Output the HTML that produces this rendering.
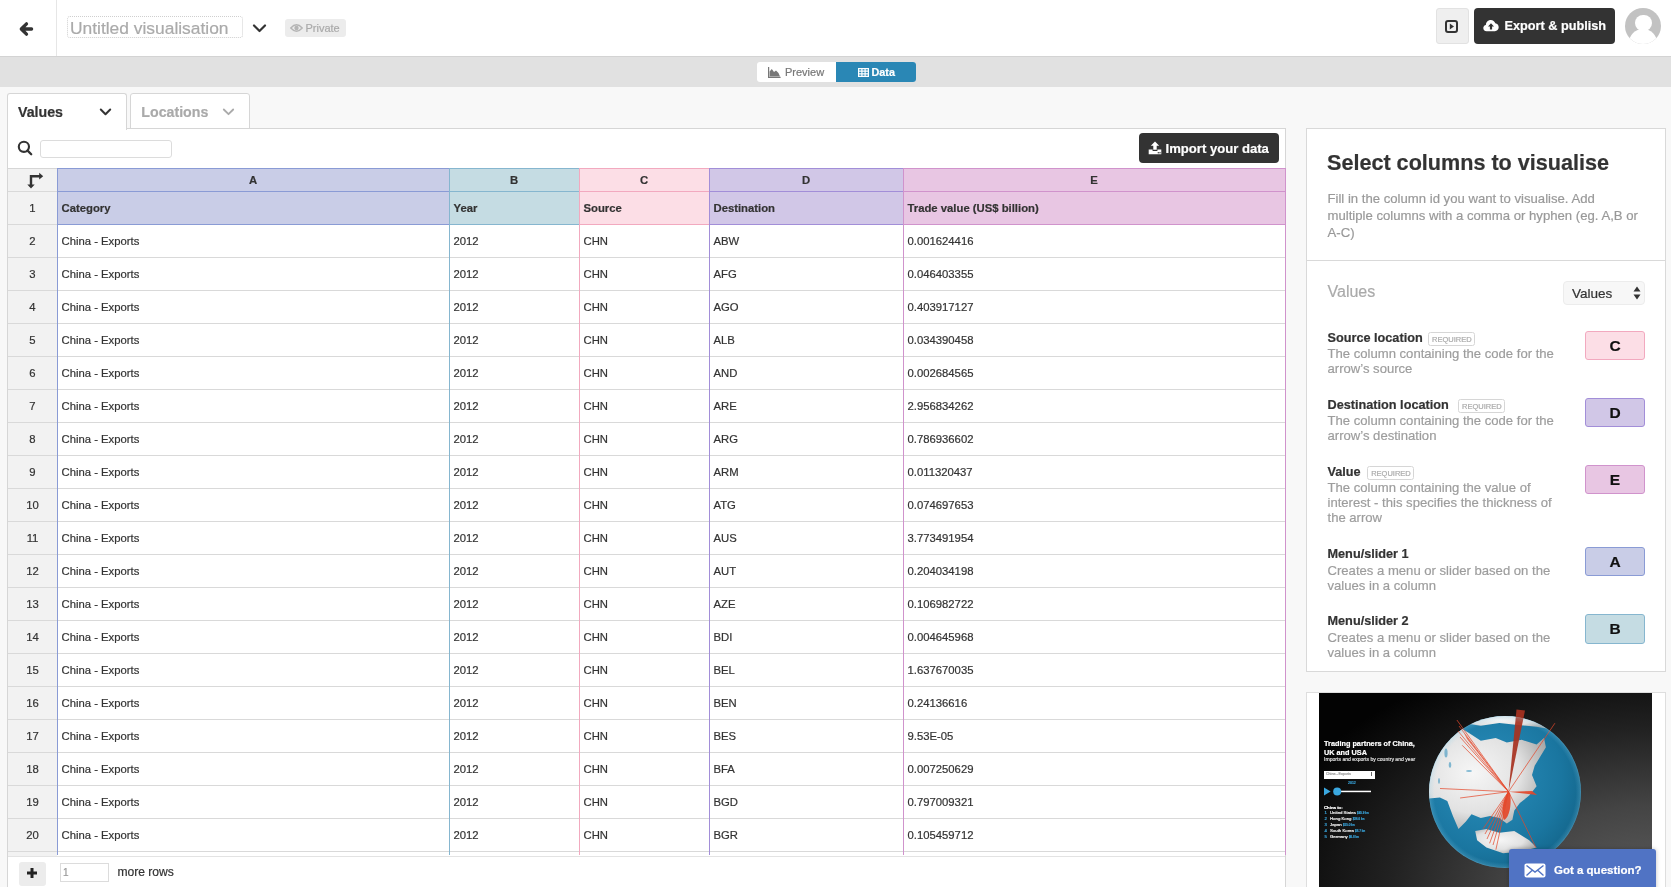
<!DOCTYPE html>
<html><head><meta charset="utf-8"><title>Flourish</title>
<style>
*{box-sizing:border-box;margin:0;padding:0}
html,body{width:1671px;height:887px;overflow:hidden;background:#f8f8f8;font-family:"Liberation Sans",sans-serif;color:#333}
.a{position:absolute;white-space:nowrap;line-height:1}
.b{font-weight:bold}
.a{-webkit-text-stroke:0.2px currentColor}
</style></head><body><div style="position:absolute;left:0;top:0;width:1671px;height:887px;overflow:hidden;will-change:transform">

<div class="a" style="left:0;top:0;width:1671px;height:57px;background:#fff;border-bottom:1px solid #d3d3d3"></div>
<div class="a" style="left:56px;top:0;width:1px;height:56px;background:#e6e6e6"></div>
<svg class="a" style="left:18px;top:20px" width="18" height="18" viewBox="0 0 18 18"><path d="M8.5 3.8 L3.3 9 L8.5 14.2 M3.8 9 H13.6" fill="none" stroke="#333" stroke-width="3.3" stroke-linecap="round" stroke-linejoin="round"/></svg>
<div class="a" style="left:67px;top:16px;width:176px;height:22px;border:1px dotted #cfcfcf;border-radius:3px"></div>
<div class="a" style="left:70px;top:19.6px;font-size:17.4px;color:#aaa">Untitled visualisation</div>
<svg class="a" style="left:252px;top:23px" width="15" height="11" viewBox="0 0 15 11"><path d="M2 2.5 L7.5 8 L13 2.5" fill="none" stroke="#333" stroke-width="2.2" stroke-linecap="round" stroke-linejoin="round"/></svg>
<div class="a" style="left:285px;top:19px;width:61px;height:18px;background:#ececec;border-radius:3px"></div>
<svg class="a" style="left:290px;top:23px" width="13" height="10" viewBox="0 0 13 10"><path d="M0.8 5 Q6.5 -1.5 12.2 5 Q6.5 11.5 0.8 5Z" fill="none" stroke="#b5b5b5" stroke-width="1.4"/><circle cx="6.5" cy="5" r="2.2" fill="#b5b5b5"/></svg>
<div class="a" style="left:305.5px;top:22.6px;font-size:11px;color:#aaa">Private</div>
<div class="a" style="left:1436px;top:8px;width:33px;height:36px;background:#efefef;border:1px solid #e2e2e2;border-radius:3px"></div>
<svg class="a" style="left:1445px;top:20px" width="13" height="13" viewBox="0 0 13 13"><rect x="1" y="1" width="11" height="11" rx="2" fill="none" stroke="#333" stroke-width="2"/><path d="M4.8 3.6 L9 6.5 L4.8 9.4Z" fill="#333"/></svg>
<div class="a" style="left:1474px;top:8px;width:141px;height:36px;background:#333;border-radius:4px"></div>
<svg class="a" style="left:1483px;top:19px" width="16" height="13" viewBox="0 0 16 13"><path d="M3.6 12.2 C1.4 12.2 0.3 10.6 0.3 9 C0.3 7.4 1.4 6.2 2.9 6 C2.9 3.2 5 1 7.8 1 C10 1 11.6 2.3 12.3 4.3 C14.3 4.5 15.7 6.2 15.7 8.3 C15.7 10.5 14 12.2 11.9 12.2 Z" fill="#fff"/><path d="M8 4.2 L11 7.4 L9.1 7.4 L9.1 10.4 L6.9 10.4 L6.9 7.4 L5 7.4Z" fill="#333"/></svg>
<div class="a b" style="left:1504.5px;top:20.3px;font-size:12.7px;color:#fff">Export &amp; publish</div>
<div class="a" style="left:1625px;top:8px;width:36px;height:36px;border-radius:50%;background:#c2c2c2;overflow:hidden"><div style="position:absolute;left:10px;top:6.5px;width:16.5px;height:16.5px;border-radius:50%;background:#fff"></div><div style="position:absolute;left:4px;top:21px;width:28px;height:28px;border-radius:50%;background:#fff"></div></div>
<div class="a" style="left:0;top:57px;width:1671px;height:30px;background:#e1e1e1"></div>
<div class="a" style="left:757px;top:62px;width:159px;height:20px;background:#fff;border-radius:3px"></div>
<div class="a" style="left:836px;top:62px;width:80px;height:20px;background:#2a87b5;border-radius:0 3px 3px 0"></div>
<svg class="a" style="left:768px;top:67px" width="13" height="11" viewBox="0 0 13 11"><path d="M0.6 0 V10.4 H12.6" fill="none" stroke="#777" stroke-width="1.2"/><path d="M1.6 9.5 V4.5 L3.8 2 L6 5 L8 3.5 L10.5 6 L12 9.5Z" fill="#777"/></svg>
<div class="a" style="left:785px;top:66.7px;font-size:11px;color:#777">Preview</div>
<svg class="a" style="left:857.5px;top:67.5px" width="11" height="9" viewBox="0 0 11 9"><path d="M0.6 0.6 H10.4 V8.4 H0.6Z M0.6 3.2 H10.4 M0.6 5.8 H10.4 M3.9 0.6 V8.4 M7.1 0.6 V8.4" fill="none" stroke="#fff" stroke-width="1.2"/></svg>
<div class="a b" style="left:871.5px;top:66.9px;font-size:10.8px;color:#fff">Data</div>
<div class="a" style="left:7px;top:93px;width:120px;height:37px;background:#fff;border:1px solid #d6d6d6;border-bottom:none;border-radius:3px 3px 0 0;z-index:2"></div>
<div class="a b" style="left:18px;top:105.1px;font-size:14.2px;color:#333;z-index:3">Values</div>
<svg class="a" style="left:99px;top:107px;z-index:3" width="13" height="10" viewBox="0 0 13 10"><path d="M1.8 2.5 L6.5 7.2 L11.2 2.5" fill="none" stroke="#333" stroke-width="2" stroke-linecap="round" stroke-linejoin="round"/></svg>
<div class="a" style="left:130px;top:93px;width:120px;height:36px;background:#fff;border:1px solid #d6d6d6;border-radius:3px 3px 0 0"></div>
<div class="a b" style="left:141.3px;top:105.1px;font-size:14.2px;color:#aaa">Locations</div>
<svg class="a" style="left:222px;top:107px" width="13" height="10" viewBox="0 0 13 10"><path d="M1.8 2.5 L6.5 7.2 L11.2 2.5" fill="none" stroke="#aaa" stroke-width="1.8" stroke-linecap="round" stroke-linejoin="round"/></svg>
<div class="a" style="left:7px;top:128px;width:1279px;height:770px;background:#fff;border:1px solid #d6d6d6"></div>
<svg class="a" style="left:16px;top:139px" width="18" height="18" viewBox="0 0 18 18"><circle cx="7.9" cy="7.8" r="5.1" fill="none" stroke="#333" stroke-width="2.1"/><path d="M11.6 11.6 L15.2 15.2" stroke="#333" stroke-width="2.3" stroke-linecap="round"/></svg>
<div class="a" style="left:40px;top:139.5px;width:132px;height:18px;border:1px solid #dcdcdc;border-radius:3px;background:#fff"></div>
<div class="a" style="left:1139px;top:133px;width:140px;height:30px;background:#333;border-radius:4px"></div>
<svg class="a" style="left:1148px;top:141px" width="15" height="14" viewBox="0 0 15 14"><path d="M7 0.5 L11.2 4.8 L8.7 4.8 L8.7 8.8 L5.3 8.8 L5.3 4.8 L2.8 4.8Z" fill="#fff"/><path d="M0.7 8.6 H4.6 V10 H9.4 V8.6 H13.3 V13.3 H0.7Z" fill="#fff"/><circle cx="10.3" cy="11.7" r="0.7" fill="#333"/><circle cx="12" cy="11.7" r="0.7" fill="#333"/></svg>
<div class="a b" style="left:1165.6px;top:141.9px;font-size:13.1px;color:#fff">Import your data</div>
<div class="a" style="left:8px;top:168px;width:49px;height:719px;background:#f2f2f2"></div>
<div class="a" style="left:8px;top:168px;width:49px;height:1px;background:#d6d6d6"></div>
<svg class="a" style="left:26px;top:172px" width="19" height="18" viewBox="0 0 19 18"><path d="M5 15 V4.2 H14" fill="none" stroke="#333" stroke-width="2.4"/><path d="M1.3 12.6 H8.7 L5 16.6Z" fill="#333"/><path d="M13.2 0.8 L17.2 4.2 L13.2 7.6Z" fill="#333"/></svg>
<div class="a" style="left:57px;top:168px;width:392px;height:57px;background:#c9cde7"></div>
<div class="a" style="left:449px;top:168px;width:130px;height:57px;background:#c5dce3"></div>
<div class="a" style="left:579px;top:168px;width:130px;height:57px;background:#fcdee6"></div>
<div class="a" style="left:709px;top:168px;width:194px;height:57px;background:#d1c7e7"></div>
<div class="a" style="left:903px;top:168px;width:382px;height:57px;background:#e8c6e3"></div>
<div class="a" style="left:8px;top:224px;width:1278px;height:1px;background:#d9d9d9"></div>
<div class="a" style="left:8px;top:257px;width:1278px;height:1px;background:#d9d9d9"></div>
<div class="a" style="left:8px;top:290px;width:1278px;height:1px;background:#d9d9d9"></div>
<div class="a" style="left:8px;top:323px;width:1278px;height:1px;background:#d9d9d9"></div>
<div class="a" style="left:8px;top:356px;width:1278px;height:1px;background:#d9d9d9"></div>
<div class="a" style="left:8px;top:389px;width:1278px;height:1px;background:#d9d9d9"></div>
<div class="a" style="left:8px;top:422px;width:1278px;height:1px;background:#d9d9d9"></div>
<div class="a" style="left:8px;top:455px;width:1278px;height:1px;background:#d9d9d9"></div>
<div class="a" style="left:8px;top:488px;width:1278px;height:1px;background:#d9d9d9"></div>
<div class="a" style="left:8px;top:521px;width:1278px;height:1px;background:#d9d9d9"></div>
<div class="a" style="left:8px;top:554px;width:1278px;height:1px;background:#d9d9d9"></div>
<div class="a" style="left:8px;top:587px;width:1278px;height:1px;background:#d9d9d9"></div>
<div class="a" style="left:8px;top:620px;width:1278px;height:1px;background:#d9d9d9"></div>
<div class="a" style="left:8px;top:653px;width:1278px;height:1px;background:#d9d9d9"></div>
<div class="a" style="left:8px;top:686px;width:1278px;height:1px;background:#d9d9d9"></div>
<div class="a" style="left:8px;top:719px;width:1278px;height:1px;background:#d9d9d9"></div>
<div class="a" style="left:8px;top:752px;width:1278px;height:1px;background:#d9d9d9"></div>
<div class="a" style="left:8px;top:785px;width:1278px;height:1px;background:#d9d9d9"></div>
<div class="a" style="left:8px;top:818px;width:1278px;height:1px;background:#d9d9d9"></div>
<div class="a" style="left:8px;top:851px;width:1278px;height:1px;background:#d9d9d9"></div>
<div class="a" style="left:57px;top:168px;width:393px;height:1px;background:#8a9bd5"></div>
<div class="a" style="left:57px;top:191px;width:393px;height:1px;background:#8a9bd5"></div>
<div class="a" style="left:57px;top:224px;width:393px;height:1px;background:#8a9bd5"></div>
<div class="a" style="left:449px;top:168px;width:131px;height:1px;background:#86b6cf"></div>
<div class="a" style="left:449px;top:191px;width:131px;height:1px;background:#86b6cf"></div>
<div class="a" style="left:449px;top:224px;width:131px;height:1px;background:#86b6cf"></div>
<div class="a" style="left:579px;top:168px;width:131px;height:1px;background:#f2a9bf"></div>
<div class="a" style="left:579px;top:191px;width:131px;height:1px;background:#f2a9bf"></div>
<div class="a" style="left:579px;top:224px;width:131px;height:1px;background:#f2a9bf"></div>
<div class="a" style="left:709px;top:168px;width:195px;height:1px;background:#a28ed8"></div>
<div class="a" style="left:709px;top:191px;width:195px;height:1px;background:#a28ed8"></div>
<div class="a" style="left:709px;top:224px;width:195px;height:1px;background:#a28ed8"></div>
<div class="a" style="left:903px;top:168px;width:383px;height:1px;background:#d093cc"></div>
<div class="a" style="left:903px;top:191px;width:383px;height:1px;background:#d093cc"></div>
<div class="a" style="left:903px;top:224px;width:383px;height:1px;background:#d093cc"></div>
<div class="a" style="left:8px;top:191px;width:49px;height:1px;background:#d9d9d9"></div>
<div class="a" style="left:57px;top:168px;width:1px;height:687px;background:#8a9bd5"></div>
<div class="a" style="left:449px;top:168px;width:1px;height:687px;background:#86b6cf"></div>
<div class="a" style="left:579px;top:168px;width:1px;height:687px;background:#f2a9bf"></div>
<div class="a" style="left:709px;top:168px;width:1px;height:687px;background:#a28ed8"></div>
<div class="a" style="left:903px;top:168px;width:1px;height:687px;background:#d093cc"></div>
<div class="a" style="left:1285px;top:168px;width:1px;height:687px;background:#d093cc"></div>
<div class="a b" style="left:57px;width:392px;text-align:center;top:174.6px;font-size:11.3px;color:#333">A</div>
<div class="a b" style="left:61.5px;top:203.3px;font-size:11.3px;color:#333">Category</div>
<div class="a b" style="left:449px;width:130px;text-align:center;top:174.6px;font-size:11.3px;color:#333">B</div>
<div class="a b" style="left:453.5px;top:203.3px;font-size:11.3px;color:#333">Year</div>
<div class="a b" style="left:579px;width:130px;text-align:center;top:174.6px;font-size:11.3px;color:#333">C</div>
<div class="a b" style="left:583.5px;top:203.3px;font-size:11.3px;color:#333">Source</div>
<div class="a b" style="left:709px;width:194px;text-align:center;top:174.6px;font-size:11.3px;color:#333">D</div>
<div class="a b" style="left:713.5px;top:203.3px;font-size:11.3px;color:#333">Destination</div>
<div class="a b" style="left:903px;width:382px;text-align:center;top:174.6px;font-size:11.3px;color:#333">E</div>
<div class="a b" style="left:907.5px;top:203.3px;font-size:11.3px;color:#333">Trade value (US$ billion)</div>
<div class="a" style="left:8px;width:49px;text-align:center;top:203.3px;font-size:11.3px;color:#333">1</div>
<div class="a" style="left:8px;width:49px;text-align:center;top:235.8px;font-size:11.3px">2</div>
<div class="a" style="left:61.5px;top:235.8px;font-size:11.3px">China - Exports</div>
<div class="a" style="left:453.5px;top:235.8px;font-size:11.3px">2012</div>
<div class="a" style="left:583.5px;top:235.8px;font-size:11.3px">CHN</div>
<div class="a" style="left:713.5px;top:235.8px;font-size:11.3px">ABW</div>
<div class="a" style="left:907.5px;top:235.8px;font-size:11.3px">0.001624416</div>
<div class="a" style="left:8px;width:49px;text-align:center;top:268.8px;font-size:11.3px">3</div>
<div class="a" style="left:61.5px;top:268.8px;font-size:11.3px">China - Exports</div>
<div class="a" style="left:453.5px;top:268.8px;font-size:11.3px">2012</div>
<div class="a" style="left:583.5px;top:268.8px;font-size:11.3px">CHN</div>
<div class="a" style="left:713.5px;top:268.8px;font-size:11.3px">AFG</div>
<div class="a" style="left:907.5px;top:268.8px;font-size:11.3px">0.046403355</div>
<div class="a" style="left:8px;width:49px;text-align:center;top:301.8px;font-size:11.3px">4</div>
<div class="a" style="left:61.5px;top:301.8px;font-size:11.3px">China - Exports</div>
<div class="a" style="left:453.5px;top:301.8px;font-size:11.3px">2012</div>
<div class="a" style="left:583.5px;top:301.8px;font-size:11.3px">CHN</div>
<div class="a" style="left:713.5px;top:301.8px;font-size:11.3px">AGO</div>
<div class="a" style="left:907.5px;top:301.8px;font-size:11.3px">0.403917127</div>
<div class="a" style="left:8px;width:49px;text-align:center;top:334.8px;font-size:11.3px">5</div>
<div class="a" style="left:61.5px;top:334.8px;font-size:11.3px">China - Exports</div>
<div class="a" style="left:453.5px;top:334.8px;font-size:11.3px">2012</div>
<div class="a" style="left:583.5px;top:334.8px;font-size:11.3px">CHN</div>
<div class="a" style="left:713.5px;top:334.8px;font-size:11.3px">ALB</div>
<div class="a" style="left:907.5px;top:334.8px;font-size:11.3px">0.034390458</div>
<div class="a" style="left:8px;width:49px;text-align:center;top:367.8px;font-size:11.3px">6</div>
<div class="a" style="left:61.5px;top:367.8px;font-size:11.3px">China - Exports</div>
<div class="a" style="left:453.5px;top:367.8px;font-size:11.3px">2012</div>
<div class="a" style="left:583.5px;top:367.8px;font-size:11.3px">CHN</div>
<div class="a" style="left:713.5px;top:367.8px;font-size:11.3px">AND</div>
<div class="a" style="left:907.5px;top:367.8px;font-size:11.3px">0.002684565</div>
<div class="a" style="left:8px;width:49px;text-align:center;top:400.8px;font-size:11.3px">7</div>
<div class="a" style="left:61.5px;top:400.8px;font-size:11.3px">China - Exports</div>
<div class="a" style="left:453.5px;top:400.8px;font-size:11.3px">2012</div>
<div class="a" style="left:583.5px;top:400.8px;font-size:11.3px">CHN</div>
<div class="a" style="left:713.5px;top:400.8px;font-size:11.3px">ARE</div>
<div class="a" style="left:907.5px;top:400.8px;font-size:11.3px">2.956834262</div>
<div class="a" style="left:8px;width:49px;text-align:center;top:433.8px;font-size:11.3px">8</div>
<div class="a" style="left:61.5px;top:433.8px;font-size:11.3px">China - Exports</div>
<div class="a" style="left:453.5px;top:433.8px;font-size:11.3px">2012</div>
<div class="a" style="left:583.5px;top:433.8px;font-size:11.3px">CHN</div>
<div class="a" style="left:713.5px;top:433.8px;font-size:11.3px">ARG</div>
<div class="a" style="left:907.5px;top:433.8px;font-size:11.3px">0.786936602</div>
<div class="a" style="left:8px;width:49px;text-align:center;top:466.8px;font-size:11.3px">9</div>
<div class="a" style="left:61.5px;top:466.8px;font-size:11.3px">China - Exports</div>
<div class="a" style="left:453.5px;top:466.8px;font-size:11.3px">2012</div>
<div class="a" style="left:583.5px;top:466.8px;font-size:11.3px">CHN</div>
<div class="a" style="left:713.5px;top:466.8px;font-size:11.3px">ARM</div>
<div class="a" style="left:907.5px;top:466.8px;font-size:11.3px">0.011320437</div>
<div class="a" style="left:8px;width:49px;text-align:center;top:499.8px;font-size:11.3px">10</div>
<div class="a" style="left:61.5px;top:499.8px;font-size:11.3px">China - Exports</div>
<div class="a" style="left:453.5px;top:499.8px;font-size:11.3px">2012</div>
<div class="a" style="left:583.5px;top:499.8px;font-size:11.3px">CHN</div>
<div class="a" style="left:713.5px;top:499.8px;font-size:11.3px">ATG</div>
<div class="a" style="left:907.5px;top:499.8px;font-size:11.3px">0.074697653</div>
<div class="a" style="left:8px;width:49px;text-align:center;top:532.8px;font-size:11.3px">11</div>
<div class="a" style="left:61.5px;top:532.8px;font-size:11.3px">China - Exports</div>
<div class="a" style="left:453.5px;top:532.8px;font-size:11.3px">2012</div>
<div class="a" style="left:583.5px;top:532.8px;font-size:11.3px">CHN</div>
<div class="a" style="left:713.5px;top:532.8px;font-size:11.3px">AUS</div>
<div class="a" style="left:907.5px;top:532.8px;font-size:11.3px">3.773491954</div>
<div class="a" style="left:8px;width:49px;text-align:center;top:565.8px;font-size:11.3px">12</div>
<div class="a" style="left:61.5px;top:565.8px;font-size:11.3px">China - Exports</div>
<div class="a" style="left:453.5px;top:565.8px;font-size:11.3px">2012</div>
<div class="a" style="left:583.5px;top:565.8px;font-size:11.3px">CHN</div>
<div class="a" style="left:713.5px;top:565.8px;font-size:11.3px">AUT</div>
<div class="a" style="left:907.5px;top:565.8px;font-size:11.3px">0.204034198</div>
<div class="a" style="left:8px;width:49px;text-align:center;top:598.8px;font-size:11.3px">13</div>
<div class="a" style="left:61.5px;top:598.8px;font-size:11.3px">China - Exports</div>
<div class="a" style="left:453.5px;top:598.8px;font-size:11.3px">2012</div>
<div class="a" style="left:583.5px;top:598.8px;font-size:11.3px">CHN</div>
<div class="a" style="left:713.5px;top:598.8px;font-size:11.3px">AZE</div>
<div class="a" style="left:907.5px;top:598.8px;font-size:11.3px">0.106982722</div>
<div class="a" style="left:8px;width:49px;text-align:center;top:631.8px;font-size:11.3px">14</div>
<div class="a" style="left:61.5px;top:631.8px;font-size:11.3px">China - Exports</div>
<div class="a" style="left:453.5px;top:631.8px;font-size:11.3px">2012</div>
<div class="a" style="left:583.5px;top:631.8px;font-size:11.3px">CHN</div>
<div class="a" style="left:713.5px;top:631.8px;font-size:11.3px">BDI</div>
<div class="a" style="left:907.5px;top:631.8px;font-size:11.3px">0.004645968</div>
<div class="a" style="left:8px;width:49px;text-align:center;top:664.8px;font-size:11.3px">15</div>
<div class="a" style="left:61.5px;top:664.8px;font-size:11.3px">China - Exports</div>
<div class="a" style="left:453.5px;top:664.8px;font-size:11.3px">2012</div>
<div class="a" style="left:583.5px;top:664.8px;font-size:11.3px">CHN</div>
<div class="a" style="left:713.5px;top:664.8px;font-size:11.3px">BEL</div>
<div class="a" style="left:907.5px;top:664.8px;font-size:11.3px">1.637670035</div>
<div class="a" style="left:8px;width:49px;text-align:center;top:697.8px;font-size:11.3px">16</div>
<div class="a" style="left:61.5px;top:697.8px;font-size:11.3px">China - Exports</div>
<div class="a" style="left:453.5px;top:697.8px;font-size:11.3px">2012</div>
<div class="a" style="left:583.5px;top:697.8px;font-size:11.3px">CHN</div>
<div class="a" style="left:713.5px;top:697.8px;font-size:11.3px">BEN</div>
<div class="a" style="left:907.5px;top:697.8px;font-size:11.3px">0.24136616</div>
<div class="a" style="left:8px;width:49px;text-align:center;top:730.8px;font-size:11.3px">17</div>
<div class="a" style="left:61.5px;top:730.8px;font-size:11.3px">China - Exports</div>
<div class="a" style="left:453.5px;top:730.8px;font-size:11.3px">2012</div>
<div class="a" style="left:583.5px;top:730.8px;font-size:11.3px">CHN</div>
<div class="a" style="left:713.5px;top:730.8px;font-size:11.3px">BES</div>
<div class="a" style="left:907.5px;top:730.8px;font-size:11.3px">9.53E-05</div>
<div class="a" style="left:8px;width:49px;text-align:center;top:763.8px;font-size:11.3px">18</div>
<div class="a" style="left:61.5px;top:763.8px;font-size:11.3px">China - Exports</div>
<div class="a" style="left:453.5px;top:763.8px;font-size:11.3px">2012</div>
<div class="a" style="left:583.5px;top:763.8px;font-size:11.3px">CHN</div>
<div class="a" style="left:713.5px;top:763.8px;font-size:11.3px">BFA</div>
<div class="a" style="left:907.5px;top:763.8px;font-size:11.3px">0.007250629</div>
<div class="a" style="left:8px;width:49px;text-align:center;top:796.8px;font-size:11.3px">19</div>
<div class="a" style="left:61.5px;top:796.8px;font-size:11.3px">China - Exports</div>
<div class="a" style="left:453.5px;top:796.8px;font-size:11.3px">2012</div>
<div class="a" style="left:583.5px;top:796.8px;font-size:11.3px">CHN</div>
<div class="a" style="left:713.5px;top:796.8px;font-size:11.3px">BGD</div>
<div class="a" style="left:907.5px;top:796.8px;font-size:11.3px">0.797009321</div>
<div class="a" style="left:8px;width:49px;text-align:center;top:829.8px;font-size:11.3px">20</div>
<div class="a" style="left:61.5px;top:829.8px;font-size:11.3px">China - Exports</div>
<div class="a" style="left:453.5px;top:829.8px;font-size:11.3px">2012</div>
<div class="a" style="left:583.5px;top:829.8px;font-size:11.3px">CHN</div>
<div class="a" style="left:713.5px;top:829.8px;font-size:11.3px">BGR</div>
<div class="a" style="left:907.5px;top:829.8px;font-size:11.3px">0.105459712</div>
<div class="a" style="left:8px;top:856px;width:1277px;height:40px;background:#fff;border-top:1px solid #e3e3e3"></div>
<div class="a" style="left:19px;top:862px;width:27px;height:24px;background:#ececec;border-radius:3px"></div>
<svg class="a" style="left:25px;top:866px" width="14" height="14" viewBox="0 0 14 14"><path d="M7 2 V12 M2 7 H12" stroke="#222" stroke-width="3"/></svg>
<div class="a" style="left:60px;top:863px;width:49px;height:19px;border:1px solid #dcdcdc;background:#fff"></div>
<div class="a" style="left:63px;top:868px;font-size:10px;color:#999">1</div>
<div class="a" style="left:117.4px;top:866.4px;font-size:12.1px;color:#333">more rows</div>
<div class="a" style="left:1306px;top:128px;width:360px;height:544px;background:#fff;border:1px solid #d9d9d9"></div>
<div class="a" style="left:1307px;top:260px;width:358px;height:1px;background:#d9d9d9"></div>
<div class="a b" style="left:1327px;top:152px;font-size:21.6px;color:#333">Select columns to visualise</div>
<div class="a" style="left:1327.5px;top:190.3px;font-size:13.15px;line-height:17px;color:#999;white-space:normal;width:330px">Fill in the column id you want to visualise. Add<br>multiple columns with a comma or hyphen (eg. A,B or<br>A-C)</div>
<div class="a" style="left:1327.5px;top:283.5px;font-size:16px;color:#aaa">Values</div>
<div class="a" style="left:1563px;top:281px;width:82px;height:24px;background:#f7f7f7;border:1px solid #ececec;border-radius:4px"></div>
<div class="a" style="left:1572px;top:286.5px;font-size:13.5px;color:#333">Values</div>
<svg class="a" style="left:1633px;top:286px" width="8" height="14" viewBox="0 0 8 14"><path d="M4 0.5 L7.5 5.5 H0.5Z M4 13.5 L7.5 8.5 H0.5Z" fill="#333"/></svg>
<div class="a b" style="left:1327.5px;top:331.9px;font-size:12.7px;color:#333">Source location</div>
<div class="a" style="left:1427.5px;top:332.3px;width:47.5px;height:14.2px;border:1px solid #d6d6d6;border-radius:2.5px"></div>
<div class="a" style="left:1432.1px;top:336.4px;font-size:7.5px;color:#aaa">REQUIRED</div>
<div class="a" style="left:1327.5px;top:346.4px;font-size:13.1px;line-height:15px;color:#9d9d9d">The column containing the code for the<br>arrow’s source</div>
<div class="a b" style="left:1585px;top:330.5px;width:60px;height:29.5px;background:#fcdee6;border:1px solid #f2a9bf;border-radius:3px;font-size:15.5px;line-height:28px;text-align:center;color:#111">C</div>
<div class="a b" style="left:1327.5px;top:398.9px;font-size:12.7px;color:#333">Destination location</div>
<div class="a" style="left:1457.5px;top:399.3px;width:47.5px;height:14.2px;border:1px solid #d6d6d6;border-radius:2.5px"></div>
<div class="a" style="left:1462.1px;top:403.4px;font-size:7.5px;color:#aaa">REQUIRED</div>
<div class="a" style="left:1327.5px;top:413.4px;font-size:13.1px;line-height:15px;color:#9d9d9d">The column containing the code for the<br>arrow’s destination</div>
<div class="a b" style="left:1585px;top:397.5px;width:60px;height:29.5px;background:#d1c7e7;border:1px solid #a28ed8;border-radius:3px;font-size:15.5px;line-height:28px;text-align:center;color:#111">D</div>
<div class="a b" style="left:1327.5px;top:465.9px;font-size:12.7px;color:#333">Value</div>
<div class="a" style="left:1366.6px;top:466.3px;width:47.5px;height:14.2px;border:1px solid #d6d6d6;border-radius:2.5px"></div>
<div class="a" style="left:1371.2px;top:470.4px;font-size:7.5px;color:#aaa">REQUIRED</div>
<div class="a" style="left:1327.5px;top:480.4px;font-size:13.1px;line-height:15px;color:#9d9d9d">The column containing the value of<br>interest - this specifies the thickness of<br>the arrow</div>
<div class="a b" style="left:1585px;top:464.5px;width:60px;height:29.5px;background:#e8c6e3;border:1px solid #d093cc;border-radius:3px;font-size:15.5px;line-height:28px;text-align:center;color:#111">E</div>
<div class="a b" style="left:1327.5px;top:548.2px;font-size:12.7px;color:#333">Menu/slider 1</div>
<div class="a" style="left:1327.5px;top:562.8px;font-size:13.1px;line-height:15px;color:#9d9d9d">Creates a menu or slider based on the<br>values in a column</div>
<div class="a b" style="left:1585px;top:546.9px;width:60px;height:29.5px;background:#c9cde7;border:1px solid #8a9bd5;border-radius:3px;font-size:15.5px;line-height:28px;text-align:center;color:#111">A</div>
<div class="a b" style="left:1327.5px;top:615.4px;font-size:12.7px;color:#333">Menu/slider 2</div>
<div class="a" style="left:1327.5px;top:629.9px;font-size:13.1px;line-height:15px;color:#9d9d9d">Creates a menu or slider based on the<br>values in a column</div>
<div class="a b" style="left:1585px;top:614.0px;width:60px;height:29.5px;background:#c5dce3;border:1px solid #86b6cf;border-radius:3px;font-size:15.5px;line-height:28px;text-align:center;color:#111">B</div>
<div class="a" style="left:1306px;top:692px;width:360px;height:220px;background:#fff;border:1px solid #dedede"></div>
<div class="a" style="left:1319px;top:693px;width:333px;height:200px;overflow:hidden;background:radial-gradient(ellipse 400px 250px at 100% 100%, #5e5e5e 0%, #444 35%, #222 65%, #030303 100%)">
<svg width="333" height="200" viewBox="0 0 333 200" style="position:absolute;left:0;top:0">
<defs>
<radialGradient id="land" cx="0.4" cy="0.45" r="0.65"><stop offset="0" stop-color="#f6f6f6"/><stop offset="0.6" stop-color="#e2e2e2"/><stop offset="1" stop-color="#a8a8a8"/></radialGradient>
<radialGradient id="sea" cx="0.38" cy="0.4" r="0.7"><stop offset="0" stop-color="#2a8fbd"/><stop offset="0.7" stop-color="#1a76a0"/><stop offset="1" stop-color="#136489"/></radialGradient>
<radialGradient id="rim" cx="0.5" cy="0.5" r="0.5"><stop offset="0.93" stop-color="#7fd0f0" stop-opacity="0"/><stop offset="0.985" stop-color="#8fd4f0" stop-opacity="0.18"/><stop offset="1" stop-color="#b0e0f5" stop-opacity="0.35"/></radialGradient>
<clipPath id="gc"><circle cx="186" cy="99" r="76"/></clipPath>
</defs>
<circle cx="186" cy="99" r="76" fill="url(#sea)"/>
<g clip-path="url(#gc)" fill="url(#land)">
<polygon points="105,106 106,78.4 116.2,54.2 128.3,39.3 139.5,33.7 148.8,39.3 161.8,47.7 176.7,44.9 187.8,49.6 202.7,46.8 217.6,51.4 225.0,44.9 226.9,54.2 221.3,63.5 215.7,72.8 213.0,82.1 217.6,93.3 210.2,102.6 200.9,110.0 195.3,117.4 193.4,126.7 187.8,130.5 180.4,124.9 171.1,123.0 161.8,124.9 152.5,121.2 146.9,128.6 139.5,136.0 133.9,123.0 128.3,108.1 120.9,104.4"/>
<polygon points="156.2,137.9 167.4,136.0 180.4,139.8 195.3,137.9 210.2,147.2 217.6,154.6 202.7,158.4 184.1,160.2 167.4,154.6 158.1,147.2"/>
<polygon points="150.6,31.0 165.5,23 189.7,20 210.2,23 228,35.6 217.6,33.7 199.0,31.9 180.4,30.0 161.8,32.8"/>
</g>
<g fill="#2a8cba" opacity="0.55"><ellipse cx="127" cy="60" rx="1.6" ry="4.5"/><ellipse cx="131" cy="72" rx="1.3" ry="3"/><ellipse cx="120" cy="88" rx="1" ry="3"/><ellipse cx="150" cy="78" rx="3" ry="1"/></g>
<g fill="none" stroke="#e4472a" stroke-width="0.8" opacity="0.9">
<path d="M189.5 98.7 L137.9 27 M189.5 98.7 L140 33 M189.5 98.7 L139 38 M189.5 98.7 L141 44 M189.5 98.7 L143.2 52.3 M189.5 98.7 L235.9 30.2 M189.5 98.7 L121 95.5 M189.5 98.7 L141.1 105 M189.5 98.7 L216.9 154.6 M189.5 98.7 L164.2 135.6 M189.5 98.7 L166 141 M189.5 98.7 L168 146 M189.5 98.7 L170.6 150.3 M189.5 98.7 L176.9 156.7 M189.5 98.7 L174 152"/>
</g>
<g fill="#e4472a" opacity="0.92">
<path d="M189.5 98.7 L197.5 16.5 L206 17.5Z" fill="#a83220"/>
<path d="M189.5 98.7 L218 101.9 L213 98Z"/>
<path d="M189.5 98.7 C183 108 182 122 185 127 C190 125 193 112 191 100Z"/>
<path d="M189.5 98.7 L145 40 L148 46Z" opacity="0.8"/>
</g>
<circle cx="186" cy="99" r="76" fill="url(#rim)"/>
</svg>
<div style="position:absolute;left:5px;top:46px;font-size:7.3px;line-height:9px;font-weight:bold;color:#fff">Trading partners of China,<br>UK and USA</div>
<div style="position:absolute;left:5px;top:64px;font-size:5.1px;color:#ddd">Imports and exports by country and year</div>
<div style="position:absolute;left:5px;top:77.5px;width:51px;height:8px;background:#fff"></div><div style="position:absolute;left:7px;top:79.5px;font-size:3.6px;color:#999">China - Exports</div><div style="position:absolute;left:52px;top:78.6px;width:1px;height:4px;background:#666"></div>
<div style="position:absolute;left:29px;top:89px;font-size:3.5px;color:#3aa8e0">2012</div>
<svg style="position:absolute;left:5px;top:94px" width="50" height="10"><path d="M0 0.4 L6.6 4.4 L0 8.4Z" fill="#3aa8e0"/><rect x="13" y="3.7" width="34" height="1.5" fill="#fff"/><circle cx="13.2" cy="4.4" r="4" fill="#3aa8e0"/></svg>
<div style="position:absolute;left:5px;top:111.5px;font-size:4.3px;line-height:6px;color:#fff;font-weight:bold">China to:</div>
<div style="position:absolute;left:5.5px;top:116.5px;font-size:4.3px;line-height:6px;color:#3aa8e0">1<br>2<br>3<br>4<br>5</div>
<div style="position:absolute;left:11px;top:116.5px;font-size:4.3px;line-height:6px;color:#eee">United States <span style="color:#3aa8e0;font-size:3px">$45.9 bn</span><br>Hong Kong <span style="color:#3aa8e0;font-size:3px">$36.6 bn</span><br>Japan <span style="color:#3aa8e0;font-size:3px">$15.0 bn</span><br>South Korea <span style="color:#3aa8e0;font-size:3px">$8.7 bn</span><br>Germany <span style="color:#3aa8e0;font-size:3px">$6.8 bn</span></div>
</div>
<div class="a" style="left:1509px;top:849px;width:147px;height:50px;background:#5073c4;border-radius:3px 3px 0 0;box-shadow:0 0 4px rgba(0,0,0,0.25)"></div>
<svg class="a" style="left:1524px;top:863px" width="22" height="15" viewBox="0 0 22 15"><rect x="0.5" y="0.5" width="21" height="14" rx="2" fill="#fff"/><path d="M2.5 2.5 L11 9 L19.5 2.5 M2.5 12.5 L8 7.5 M19.5 12.5 L14 7.5" fill="none" stroke="#5073c4" stroke-width="1.4"/></svg>
<div class="a b" style="left:1554px;top:865.3px;font-size:11.5px;color:#fff">Got a question?</div>
</div></body></html>
